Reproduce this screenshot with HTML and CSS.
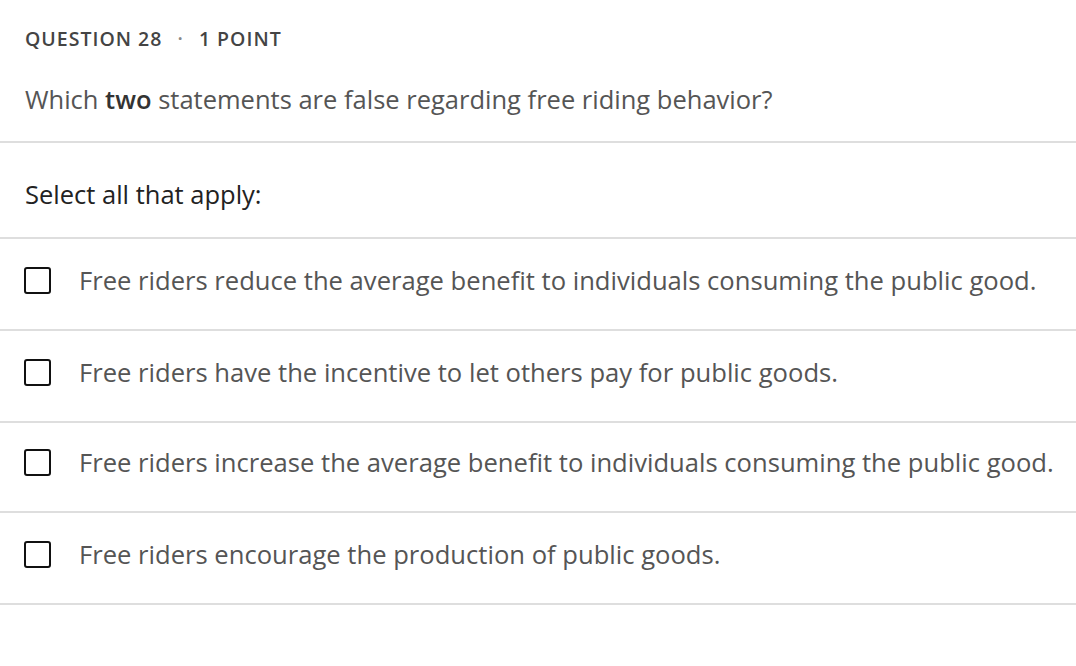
FILE: index.html
```html
<!DOCTYPE html>
<html>
<head>
<meta charset="utf-8">
<link rel="stylesheet" href="styles.css">
</head>
<body>
<div class="question">
  <div class="q-head">
    <div class="meta">QUESTION 28 <span class="dot">·</span> 1 POINT</div>
    <div class="prompt">Which <b>two</b> statements are false regarding free riding behavior?</div>
  </div>
  <div class="instr">Select all that apply:</div>
  <ul class="options">
    <li class="option"><span class="box"></span><span class="label">Free riders reduce the average benefit to individuals consuming the public good.</span></li>
    <li class="option"><span class="box"></span><span class="label">Free riders have the incentive to let others pay for public goods.</span></li>
    <li class="option short"><span class="box"></span><span class="label">Free riders increase the average benefit to individuals consuming the public good.</span></li>
    <li class="option"><span class="box"></span><span class="label">Free riders encourage the production of public goods.</span></li>
  </ul>
</div>
</body>
</html>
```
FILE: styles.css
```css
html, body { margin: 0; padding: 0; background: #fff; }
body { font-family: "Open Sans", "Liberation Sans", sans-serif; color: #555; }
.question { width: 1076px; }
.q-head { padding: 26px 0 0 25px; box-sizing: border-box; border-bottom: 2px solid #dedede; height: 143px; }
.meta { font-size: 19.5px; font-weight: 600; letter-spacing: 1px; color: #444; line-height: 26px; }
.dot { margin: 0 9px; color: #888; }
.prompt { margin-top: 30px; font-size: 25.5px; line-height: 34px; color: #555; }
.prompt b { font-weight: 600; color: #333; }
.instr { height: 96px; box-sizing: border-box; border-bottom: 2px solid #dedede; padding: 7px 25px 0; display: flex; align-items: center; font-size: 25.5px; color: #222; }
.options { list-style: none; margin: 0; padding: 0; }
.option { height: 92px; box-sizing: border-box; border-bottom: 2px solid #dedede; display: flex; align-items: center; padding: 0 0 8px 24px; }
.option.short { height: 90px; padding-bottom: 9px; }
.box { width: 23px; height: 23px; border: 2px solid #111; border-radius: 3px; flex: none; margin-right: 28px; }
.label { font-size: 25.6px; color: #555; }
```
